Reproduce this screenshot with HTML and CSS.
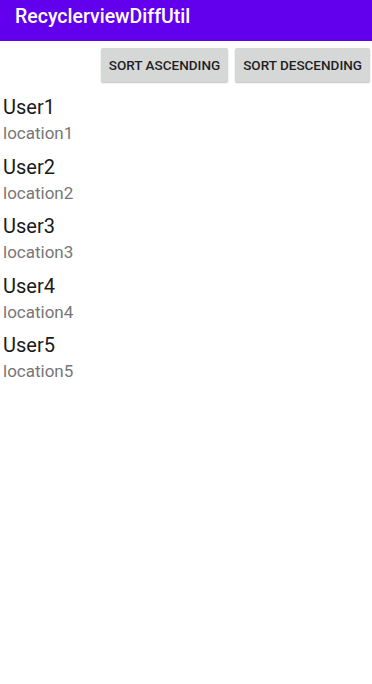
FILE: index.html
```html
<!DOCTYPE html>
<html>
<head>
<meta charset="utf-8">
<link rel="stylesheet" href="styles.css">
</head>
<body>
<div class="appbar">RecyclerviewDiffUtil</div>
<div class="actions">
  <button class="btn">Sort ascending</button>
  <button class="btn">Sort descending</button>
</div>
<div class="list">
  <div class="item"><div class="name">User1</div><div class="loc">location1</div></div>
  <div class="item"><div class="name">User2</div><div class="loc">location2</div></div>
  <div class="item"><div class="name">User3</div><div class="loc">location3</div></div>
  <div class="item"><div class="name">User4</div><div class="loc">location4</div></div>
  <div class="item"><div class="name">User5</div><div class="loc">location5</div></div>
</div>
</body>
</html>
```
FILE: styles.css
```css
html, body {
  margin: 0;
  padding: 0;
  background: #ffffff;
  font-family: Roboto, "Noto Sans", sans-serif;
}
.appbar {
  height: 41px;
  background: #6200ee;
  color: #ffffff;
  font-size: 19.5px;
  font-weight: 500;
  padding-left: 15px;
  line-height: 33px;
  box-sizing: border-box;
}
.actions {
  display: flex;
  justify-content: flex-end;
  gap: 7px;
  padding: 7px 2px 0 0;
}
.btn {
  height: 34px;
  border: none;
  border-radius: 2px;
  background: #d6d7d7;
  color: #1f1f1f;
  font-family: Roboto, "Noto Sans", sans-serif;
  font-size: 13.5px;
  font-weight: 500;
  text-transform: uppercase;
  padding: 0 8px;
  box-shadow: 0 1px 1.5px rgba(0,0,0,0.25);
  margin: 0;
}
.list {
  padding: 12px 0 0 3px;
}
.item {
  height: 59.5px;
}
.name {
  font-size: 20px;
  color: #1a1a1a;
  line-height: 26px;
}
.loc {
  font-size: 17px;
  color: #767676;
  line-height: 26px;
}
```
